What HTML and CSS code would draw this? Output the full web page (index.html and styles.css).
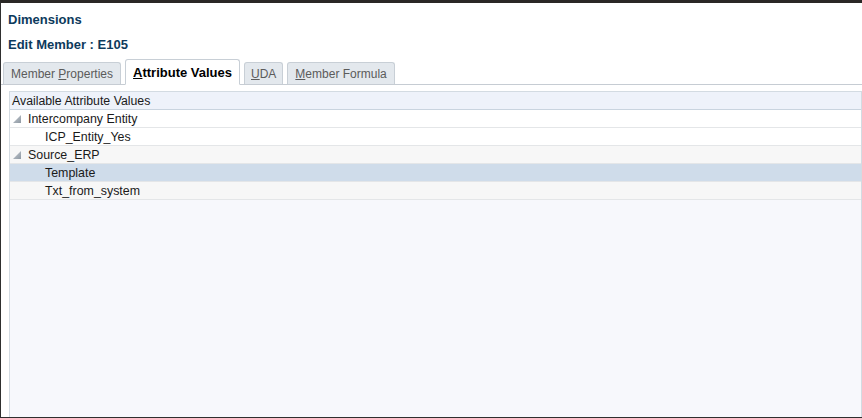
FILE: index.html
```html
<!DOCTYPE html>
<html>
<head>
<meta charset="utf-8">
<link rel="stylesheet" href="styles.css">
</head>
<body>
<div class="frame">
  <div class="title">Dimensions</div>
  <div class="sub">Edit Member : E105</div>
  <div class="tabs">
    <div class="tab">Member <u>P</u>roperties</div>
    <div class="tab active"><u>A</u>ttribute Values</div>
    <div class="tab narrow"><u>U</u>DA</div>
    <div class="tab"><u>M</u>ember Formula</div>
  </div>
  <div class="panel">
    <div class="grid">
      <div class="head">Available Attribute Values</div>
      <div class="row lvl0"><svg class="tri" width="8" height="8" viewBox="0 0 8 8"><defs><linearGradient id="g" x1="0" y1="0" x2="1" y2="1"><stop offset="0" stop-color="#c3cad1"/><stop offset="1" stop-color="#8f99a3"/></linearGradient></defs><polygon points="8,0 8,8 0,8" fill="url(#g)"/></svg>Intercompany Entity</div>
      <div class="row lvl1">ICP_Entity_Yes</div>
      <div class="row lvl0 alt"><svg class="tri" width="8" height="8" viewBox="0 0 8 8"><polygon points="8,0 8,8 0,8" fill="url(#g)"/></svg>Source_ERP</div>
      <div class="row lvl1 sel">Template</div>
      <div class="row lvl1 alt">Txt_from_system</div>
      <div class="empty"></div>
    </div>
  </div>
</div>
</body>
</html>
```

FILE: styles.css
```css
html, body {
  margin: 0;
  padding: 0;
  background: #ffffff;
}
body {
  font-family: "Liberation Sans", Arial, sans-serif;
  font-size: 12px;
  color: #1a1a1a;
}
.frame {
  width: 862px;
  height: 418px;
  box-sizing: border-box;
  border-top: 3px solid #2a2826;
  border-left: 1px solid #2f2f2f;
  border-bottom: 1px solid #2f2f2f;
  display: flex;
  flex-direction: column;
  overflow: hidden;
}
.title {
  height: 33px;
  line-height: 33px;
  padding-left: 7px;
  font-weight: bold;
  font-size: 13px;
  color: #0d3a5c;
}
.sub {
  height: 18px;
  line-height: 18px;
  padding-left: 7px;
  font-weight: bold;
  font-size: 13px;
  color: #0d3a5c;
}
.tabs {
  margin-top: 6px;
  height: 24px;
  display: flex;
  align-items: flex-end;
  gap: 4px;
  padding-left: 2px;
  border-bottom: 1px solid #c6ccd3;
}
.tab {
  height: 21px;
  line-height: 22px;
  padding: 0 7px;
  background: #e3e8ed;
  border: 1px solid #c8cfd6;
  border-bottom: none;
  border-radius: 3px 3px 0 0;
  color: #5b5b5b;
  font-size: 12px;
  white-space: nowrap;
}
.tab.narrow {
  padding: 0 6px;
}
.tab u {
  text-decoration: underline;
  text-underline-offset: 1px;
}
.tab.active {
  height: 24px;
  line-height: 26px;
  margin-bottom: -1px;
  background: #ffffff;
  border-bottom: 1px solid #ffffff;
  color: #000000;
  font-weight: bold;
  font-size: 13px;
}
.panel {
  flex: 1;
  padding: 6px 0 0 8px;
  display: flex;
  flex-direction: column;
}
.grid {
  flex: 1;
  display: flex;
  flex-direction: column;
  border: 1px solid #d3dbe2;
  border-bottom: none;
  background: #f7f8fc;
}
.head {
  height: 17px;
  line-height: 18px;
  padding-left: 2px;
  background: #eef2fa;
  border-bottom: 1px solid #c9d4df;
  color: #1a1a1a;
  font-size: 12.3px;
}
.row {
  height: 17px;
  line-height: 18px;
  background: #ffffff;
  border-bottom: 1px solid #e4e6e8;
  display: flex;
  align-items: center;
  color: #1a1a1a;
  font-size: 12.4px;
  white-space: nowrap;
}
.row.alt {
  background: #f7f7f7;
}
.row.sel {
  background: #cfdcea;
  border-bottom-color: #e4e6e8;
}
.lvl0 {
  padding-left: 3px;
}
.lvl1 {
  padding-left: 35px;
}
.tri {
  margin-right: 7px;
  flex: none;
}
.empty {
  flex: 1;
}
```
